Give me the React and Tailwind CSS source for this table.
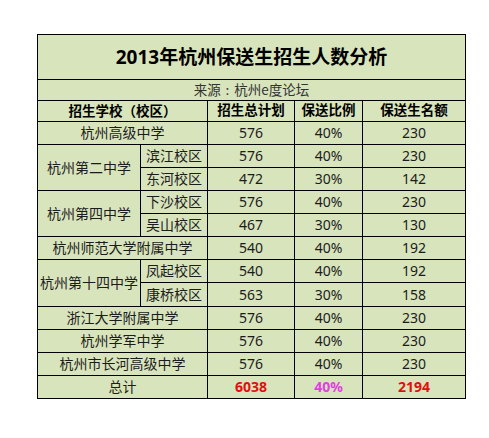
import React from "react";

const font = { fontFamily: '"Noto Sans", "Noto Sans CJK SC", sans-serif' };
const cjk = { fontFamily: '"Noto Sans CJK SC", "Noto Sans", sans-serif' };

function C({ children, className = "", style }) {
  return (
    <div style={style} className={"bg-[#d8e4bc] flex items-center justify-center leading-none whitespace-nowrap " + className}>
      {children}
    </div>
  );
}

const rows = [
  { name: "杭州高级中学", span: true, v: ["576", "40%", "230"] },
  { name: "杭州第二中学", sub: "滨江校区", v: ["576", "40%", "230"] },
  { sub: "东河校区", v: ["472", "30%", "142"] },
  { name: "杭州第四中学", sub: "下沙校区", v: ["576", "40%", "230"] },
  { sub: "吴山校区", v: ["467", "30%", "130"] },
  { name: "杭州师范大学附属中学", span: true, v: ["540", "40%", "192"] },
  { name: "杭州第十四中学", sub: "凤起校区", v: ["540", "40%", "192"] },
  { sub: "康桥校区", v: ["563", "30%", "158"] },
  { name: "浙江大学附属中学", span: true, v: ["576", "40%", "230"] },
  { name: "杭州学军中学", span: true, v: ["576", "40%", "230"] },
  { name: "杭州市长河高级中学", span: true, v: ["576", "40%", "230"] },
];

export default function App() {
  return (
    <div className="w-[489px] h-[438px] bg-white pt-[34px] pl-[37px]" style={font}>
      <div className="inline-grid bg-black p-px gap-px grid-cols-[102px_66px_86px_67px_102px] grid-rows-[44px_20px_20px_repeat(7,22px)_23px_repeat(4,22px)] text-[14px] text-[#1c1c1c]">
        <C className="col-span-5 text-[19px] font-bold text-black">2013年杭州保送生招生人数分析</C>
        <C className="col-span-5 text-[13.5px] text-[#333]" style={cjk}>
          来源<span className="inline-block w-[13.5px] text-center">:</span>杭州e度论坛
        </C>
        <C className="col-span-2 text-[13.5px] font-bold text-black" style={cjk}>招生学校（校区）</C>
        <C className="text-[13.5px] font-bold text-black">招生总计划</C>
        <C className="text-[13.5px] font-bold text-black">保送比例</C>
        <C className="text-[13.5px] font-bold text-black">保送生名额</C>
        {rows.map((r, i) => (
          <React.Fragment key={i}>
            {r.span && <C className="col-span-2">{r.name}</C>}
            {!r.span && r.name && <C className="row-span-2">{r.name}</C>}
            {r.sub && <C>{r.sub}</C>}
            <C>{r.v[0]}</C>
            <C>{r.v[1]}</C>
            <C>{r.v[2]}</C>
          </React.Fragment>
        ))}
        <C className="col-span-2">总计</C>
        <C className="font-bold text-[#e01010]">6038</C>
        <C className="font-bold text-[#e040e0]">40%</C>
        <C className="font-bold text-[#e01010]">2194</C>
      </div>
    </div>
  );
}
